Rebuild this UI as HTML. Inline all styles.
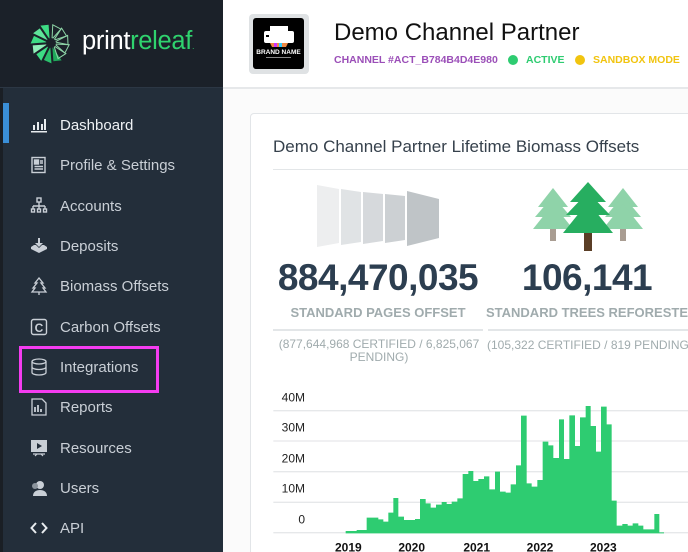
<!DOCTYPE html>
<html><head><meta charset="utf-8"><style>
*{margin:0;padding:0;box-sizing:border-box}
html,body{width:688px;height:552px;overflow:hidden}
body{font-family:"Liberation Sans",sans-serif;background:#fbfbfb;position:relative}
.sb{position:absolute;left:0;top:0;width:223px;height:552px;background:#232e3a}
.sbtop{position:absolute;left:0;top:0;width:223px;height:88px;background:#1b2129;border-bottom:1px solid #2c3744}
.strip{position:absolute;left:0;top:88px;width:3px;height:464px;background:#1a1f25}
.act{position:absolute;left:3px;top:103px;width:6px;height:40px;background:#3a8fd8}
.nav{position:absolute;left:60px;font-size:15px;color:#c9cfd6;line-height:20px}
.ic{position:absolute;left:30px;width:18px;height:18px}
.mag{position:absolute;left:19px;top:346px;width:140px;height:47px;border:3px solid #f43cf0}
.hdr{position:absolute;left:223px;top:0;width:465px;height:89px;background:#fff;border-bottom:2px solid #e6e8ea}
.card{position:absolute;left:250px;top:113px;width:460px;height:439px;background:#fff;border:1px solid #e2e5e8;border-bottom:none;border-radius:4px 4px 0 0}
.t{position:absolute;white-space:nowrap}
</style></head><body>
<div class="sb"></div><div class="sbtop"></div><div class="strip"></div><div class="act"></div>
<svg style="position:absolute;left:28px;top:20px" width="46" height="46" viewBox="-23 -23 46 46">
<g fill="#3ddc84">
<polygon points="0,-4 -4,-20 4,-18" transform="rotate(-20)"/>
<polygon points="0,-4 -4,-20 4,-18" transform="rotate(-50)" fill="#5fe39a"/>
<polygon points="0,-4 -4,-20 4,-18" transform="rotate(-80)"/>
<polygon points="0,-4 -4,-20 4,-18" transform="rotate(-110)" fill="#8ff0b8"/>
<polygon points="0,-4 -4,-20 4,-18" transform="rotate(-140)"/>
<polygon points="0,-4 -4,-20 4,-18" transform="rotate(-170)" fill="#2bbf6c"/>
<polygon points="0,-4 -4,-20 4,-18" transform="rotate(160)" fill="#1fa85a"/>
</g>
<g fill="none" stroke="#8fd6a8" stroke-width="1">
<polygon points="0,-4 -3,-18 6,-16" transform="rotate(15)"/>
<polygon points="0,-4 -3,-18 6,-16" transform="rotate(45)"/>
<polygon points="0,-4 -3,-18 6,-16" transform="rotate(75)"/>
<polygon points="0,-4 -3,-18 6,-16" transform="rotate(105)"/>
<polygon points="0,-4 -3,-18 6,-16" transform="rotate(135)"/>
</g>
<circle r="5" fill="#1b2129"/>
</svg>
<div class="t" style="left:82px;top:27px;font-size:25.5px;color:#fff;letter-spacing:-0.3px">print<span style="color:#2fd36e">releaf</span><span style="color:#2fd36e;font-size:8px">.</span></div>

<svg class="ic" style="top:116px" viewBox="0 0 18 18" fill="#e8ecef"><rect x="3" y="9" width="2" height="5"/><rect x="7" y="6" width="2" height="8"/><rect x="11" y="8" width="2" height="6"/><rect x="14" y="3" width="2" height="11"/><rect x="1" y="15" width="16" height="1.5"/></svg>
<div class="nav" style="top:116px;color:#eef1f4">Dashboard</div>
<svg class="ic" style="top:156px" viewBox="0 0 18 18" fill="none" stroke="#c9cfd6" stroke-width="1.4"><rect x="2" y="1.5" width="13" height="15"/><rect x="4.5" y="4" width="4" height="4" fill="#c9cfd6"/><path d="M10 5h3M10 7h3M4.5 10.5h8.5M4.5 13h8.5"/></svg>
<div class="nav" style="top:156px">Profile &amp; Settings</div>
<svg class="ic" style="top:197px" viewBox="0 0 18 18" fill="none" stroke="#c9cfd6" stroke-width="1.4"><rect x="7" y="1" width="4" height="4"/><path d="M9 5v4M3 9h12M3 9v3M9 9v3M15 9v3"/><rect x="1.5" y="12" width="3" height="3"/><rect x="7.5" y="12" width="3" height="3"/><rect x="13.5" y="12" width="3" height="3"/></svg>
<div class="nav" style="top:197px">Accounts</div>
<svg class="ic" style="top:237px" viewBox="0 0 18 18" fill="#c9cfd6"><rect x="8" y="1" width="2" height="6"/><polygon points="5,6 13,6 9,10"/><path d="M1 10l3-2h2l3 3 3-3h2l3 2v2l-8 4-8-4z"/></svg>
<div class="nav" style="top:237px">Deposits</div>
<svg class="ic" style="top:277px" viewBox="0 0 18 18" fill="none" stroke="#c9cfd6" stroke-width="1.3"><path d="M9 1l-4 5h2l-4 5h2l-3 4h14l-3-4h2l-4-5h2z M9 15v3"/></svg>
<div class="nav" style="top:277px">Biomass Offsets</div>
<svg class="ic" style="top:318px" viewBox="0 0 18 18"><rect x="1.5" y="1.5" width="15" height="15" rx="2" fill="none" stroke="#c9cfd6" stroke-width="1.4"/><text x="9" y="14" text-anchor="middle" font-size="12" font-weight="bold" fill="#c9cfd6" font-family="Liberation Sans">C</text></svg>
<div class="nav" style="top:318px">Carbon Offsets</div>
<svg class="ic" style="top:358px" viewBox="0 0 18 18" fill="none" stroke="#c9cfd6" stroke-width="1.3"><ellipse cx="9" cy="3.5" rx="7" ry="2.5"/><path d="M2 3.5v11c0 1.4 3 2.5 7 2.5s7-1.1 7-2.5v-11M2 9c0 1.4 3 2.5 7 2.5s7-1.1 7-2.5"/></svg>
<div class="nav" style="top:358px">Integrations</div>
<div class="mag"></div>
<svg class="ic" style="top:398px" viewBox="0 0 18 18" fill="none" stroke="#c9cfd6" stroke-width="1.3"><path d="M2 1h10l4 4v12H2z"/><path d="M5 14V9M8 14V7M11 14v-3" stroke-width="1.8"/></svg>
<div class="nav" style="top:398px">Reports</div>
<svg class="ic" style="top:439px" viewBox="0 0 18 18" fill="#c9cfd6"><rect x="1" y="1" width="16" height="12"/><polygon points="7,4 12,7 7,10" fill="#232e3a"/><path d="M3 15h12M5 17l2-2M13 17l-2-2" stroke="#c9cfd6" stroke-width="1.2"/></svg>
<div class="nav" style="top:439px">Resources</div>
<svg class="ic" style="top:479px" viewBox="0 0 18 18" fill="#c9cfd6"><circle cx="10" cy="6" r="4"/><path d="M3 17c0-4 3-6 7-6s7 2 7 6z"/><circle cx="5" cy="7" r="3" fill="#8a939c"/></svg>
<div class="nav" style="top:479px">Users</div>
<svg class="ic" style="top:519px" viewBox="0 0 18 18" fill="none" stroke="#e8ecef" stroke-width="2"><path d="M6 4L1.5 9 6 14M12 4l4.5 5L12 14"/></svg>
<div class="nav" style="top:519px">API</div>

<div class="hdr"></div>
<div style="position:absolute;left:249px;top:14px;width:60px;height:60px;background:#dfe2e4;border-radius:4px"></div>
<div style="position:absolute;left:253px;top:18px;width:51px;height:51px;background:#000;border-radius:3px"></div>
<svg style="position:absolute;left:253px;top:18px" width="51" height="51" viewBox="0 0 51 51"><rect x="17" y="8" width="18" height="6" fill="#fff"/><rect x="11" y="13" width="30" height="12" rx="2" fill="#fff"/><rect x="13" y="17" width="3" height="2" fill="#000"/><polygon points="17,25 35,25 33,29 19,29" fill="#e84"/><rect x="21" y="25" width="3" height="4" fill="#c3f"/><rect x="26" y="25" width="3" height="4" fill="#3cf"/><text x="25.5" y="36" text-anchor="middle" font-size="6.5" font-weight="bold" fill="#fff" font-family="Liberation Sans">BRAND NAME</text><rect x="13" y="39" width="25" height="1" fill="#888"/></svg>
<div class="t" style="left:334px;top:19px;font-size:24px;color:#111">Demo Channel Partner</div>
<div class="t" style="left:334px;top:54px;font-size:10.5px;font-weight:bold;color:#9b4fb8">CHANNEL #ACT_B784B4D4E980</div>
<div style="position:absolute;left:508px;top:55px;width:10px;height:10px;border-radius:50%;background:#2ecc71"></div>
<div class="t" style="left:526px;top:54px;font-size:10.5px;font-weight:bold;color:#2ecc71">ACTIVE</div>
<div style="position:absolute;left:575px;top:55px;width:10px;height:10px;border-radius:50%;background:#f1c40f"></div>
<div class="t" style="left:593px;top:54px;font-size:10.5px;font-weight:bold;color:#f1c40f">SANDBOX MODE</div>

<div class="card"></div>
<div class="t" style="left:273px;top:137px;font-size:17px;color:#36414c">Demo Channel Partner Lifetime Biomass Offsets</div>
<div style="position:absolute;left:273px;top:169px;width:415px;height:1px;background:#e3e6e8"></div>
<svg style="position:absolute;left:317px;top:185px" width="124" height="64" viewBox="0 0 124 64"><polygon points="0,0 22,4 22,58 0,62" fill="#edeeef"/><polygon points="24,4 44,7 44,57 24,60" fill="#e0e3e5"/><polygon points="46,7 66,9 66,56 46,59" fill="#d6d9dc"/><polygon points="68,9 88,11 88,55 68,58" fill="#ccd0d3"/><polygon points="90,6 122,14 122,53 90,61" fill="#bfc4c7"/></svg>
<svg style="position:absolute;left:533px;top:182px" width="110" height="70" viewBox="0 0 110 70">
<g fill="#8fd3a9"><polygon points="20,6 5,25 35,25"/><polygon points="20,14 2,35 38,35"/><polygon points="20,22 0,47 40,47"/><rect x="17" y="47" width="6" height="12" fill="#a99d92"/>
<polygon points="90,6 75,25 105,25"/><polygon points="90,14 72,35 108,35"/><polygon points="90,22 70,47 110,47"/><rect x="87" y="47" width="6" height="12" fill="#a99d92"/></g>
<g fill="#27ae60"><polygon points="55,0 37,20 73,20"/><polygon points="55,10 33,33 77,33"/><polygon points="55,20 30,51 80,51"/></g><rect x="51" y="51" width="8" height="18" fill="#5a3e26"/></svg>
<div class="t" style="left:268px;top:257px;width:220px;text-align:center;font-size:37px;font-weight:bold;color:#2c3e50;letter-spacing:-0.5px">884,470,035</div>
<div class="t" style="left:487px;top:257px;width:200px;text-align:center;font-size:37px;font-weight:bold;color:#2c3e50;letter-spacing:-0.5px">106,141</div>
<div class="t" style="left:273px;top:305px;width:210px;text-align:center;font-size:13px;font-weight:bold;color:#a0abad">STANDARD PAGES OFFSET</div>
<div class="t" style="left:486px;top:305px;font-size:13px;font-weight:bold;color:#a0abad">STANDARD TREES REFORESTED</div>
<div style="position:absolute;left:273px;top:329px;width:210px;height:2px;background:#e3e6e8"></div>
<div style="position:absolute;left:488px;top:329px;width:200px;height:2px;background:#e3e6e8"></div>
<div class="t" style="left:270px;top:338px;width:218px;text-align:center;font-size:12px;color:#a0abad;white-space:normal;line-height:13px">(877,644,968 CERTIFIED / 6,825,067 PENDING)</div>
<div class="t" style="left:487px;top:338px;font-size:12px;color:#a0abad">(105,322 CERTIFIED / 819 PENDING)</div>

<svg style="position:absolute;left:260px;top:380px" width="428" height="172" viewBox="0 0 1284 516">
<g stroke="#e6e8ea" stroke-width="4"><path d="M40 92H1284M40 183H1284M40 275H1284M40 367H1284M40 458H1284"/></g>
<g font-family="Liberation Sans" font-size="36" fill="#222" text-anchor="end"><text x="135" y="64">40M</text><text x="135" y="155">30M</text><text x="135" y="247">20M</text><text x="135" y="338">10M</text><text x="135" y="430">0</text></g>
<g font-family="Liberation Sans" font-size="36" font-weight="bold" fill="#111" text-anchor="middle"><text x="265" y="515">2019</text><text x="455" y="515">2020</text><text x="650" y="515">2021</text><text x="840" y="515">2022</text><text x="1030" y="515">2023</text></g>
<path fill="#2ecc71" d="M257 460V453H290V450H320V413H355V418H370V425H385V398H400V354H415V410H432V420H465V417H480V357H497V370H512V383H528V374H545V366H560V372H575V365H592V355H608V282H625V273H640V303H655V297H672V289H688V328H705V275H720V335H737V338H752V313H768V256H783V107H800V310H815V320H832V300H848V185H865V196H880V234H897V118H912V237H928V106H945V198H960V112H977V78H992V138H1008V215H1023V80H1040V133H1055V362H1070V437H1087V432H1103V437H1118V430H1135V437H1150V448H1183V402H1198V457H1212V460Z"/>
</svg>
</body></html>
